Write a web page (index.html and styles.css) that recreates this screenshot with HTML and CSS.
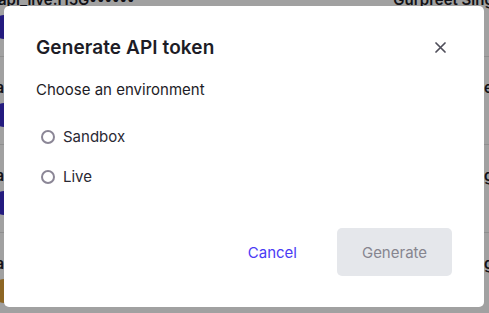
FILE: index.html
```html
<!DOCTYPE html>
<html>
<head>
<meta charset="utf-8">
<link rel="stylesheet" href="styles.css">
</head>
<body>
<div class="page">
  <div class="row first"><span class="key">api_live.H5G••••••</span><span class="owner">Gurpreet Singh</span></div>
  <div class="row"><span class="edge-left">Data</span><span class="edge-right">email</span></div>
  <div class="row"><span class="edge-left">Data</span><span class="edge-right">gsingh</span></div>
  <div class="row"><span class="edge-left">Data</span><span class="edge-right">gsingh</span></div>
  <span class="avatar purple a1"></span>
  <span class="avatar purple a2"></span>
  <span class="avatar purple a3"></span>
  <span class="avatar orange a4"></span>
</div>
<div class="overlay"></div>
<div class="modal">
  <div class="header">
    <h2 class="title">Generate API token</h2>
    <button class="close" aria-label="Close">
      <svg width="11" height="11" viewBox="0 0 11 11"><path d="M1 1 L10 10 M10 1 L1 10" stroke="#4f4e5a" stroke-width="1.7" stroke-linecap="round"/></svg>
    </button>
  </div>
  <p class="label">Choose an environment</p>
  <div class="options">
    <label class="option"><span class="radio"></span>Sandbox</label>
    <label class="option"><span class="radio"></span>Live</label>
  </div>
  <div class="footer">
    <button class="cancel">Cancel</button>
    <button class="generate" disabled>Generate</button>
  </div>
</div>
</body>
</html>
```
FILE: styles.css
```css
* { box-sizing: border-box; }
html, body { margin: 0; padding: 0; }
body {
  width: 489px;
  height: 313px;
  overflow: hidden;
  background: #fff;
  font-family: Inter, "Noto Sans", sans-serif;
  color: #1d1c26;
  position: relative;
}
.page {
  display: flex;
  flex-direction: column;
  position: relative;
  height: 313px;
}
.row {
  height: 88px;
  flex: none;
  display: flex;
  align-items: flex-start;
  justify-content: space-between;
  border-bottom: 1px solid #e2e2e2;
  font-size: 15px;
  font-weight: 600;
}
.row.first {
  height: 67px;
  margin-top: -10px;
}
.key { margin-left: -2px; }
.owner { margin-right: -14px; }
.edge-left {
  width: 4px;
  overflow: hidden;
  direction: rtl;
  white-space: nowrap;
  margin-top: 21px;
}
.edge-right {
  width: 5px;
  overflow: hidden;
  white-space: nowrap;
  margin-top: 21px;
}
.avatar {
  position: absolute;
  left: -8px;
  width: 24px;
  height: 24px;
  border-radius: 50%;
}
.a1 { top: 15px; }
.a2 { top: 103px; }
.a3 { top: 191px; }
.a4 { top: 279px; }
.purple { background: #3a2cc9; }
.orange { background: #e0a23a; }
.overlay {
  position: absolute;
  inset: 0;
  background: rgba(0, 0, 0, 0.37);
}
.modal {
  position: absolute;
  left: 4px;
  top: 6px;
  width: 480px;
  height: 301px;
  background: #fff;
  border-radius: 5px;
  padding: 28px 32px 0 32px;
  display: flex;
  flex-direction: column;
}
.header {
  display: flex;
  align-items: center;
  justify-content: space-between;
  height: 26px;
}
.title {
  margin: 0;
  font-size: 19px;
  font-weight: 600;
  letter-spacing: 0.1px;
  color: #1d1c26;
}
.close {
  border: 0;
  background: none;
  padding: 0;
  margin-right: 6px;
  width: 11px;
  height: 11px;
  display: flex;
}
.label {
  margin: 20px 0 0 0;
  font-size: 15px;
  line-height: 20px;
  color: #1d1c26;
}
.options {
  display: flex;
  flex-direction: column;
  gap: 20px;
  margin-top: 27px;
  padding-left: 5px;
}
.option {
  display: flex;
  align-items: center;
  gap: 8px;
  font-size: 15px;
  line-height: 20px;
  color: #2a2934;
}
.radio {
  width: 14px;
  height: 14px;
  border: 2px solid #8b8696;
  border-radius: 50%;
}
.footer {
  margin-top: auto;
  margin-bottom: 31px;
  display: flex;
  justify-content: flex-end;
  align-items: center;
  gap: 40px;
}
.cancel {
  border: 0;
  background: none;
  padding: 0;
  font-family: inherit;
  font-size: 15px;
  color: #4b3bf5;
}
.generate {
  border: 0;
  width: 115px;
  height: 48px;
  border-radius: 5px;
  background: #e5e7eb;
  color: #86858f;
  font-family: inherit;
  font-size: 15px;
}
```
